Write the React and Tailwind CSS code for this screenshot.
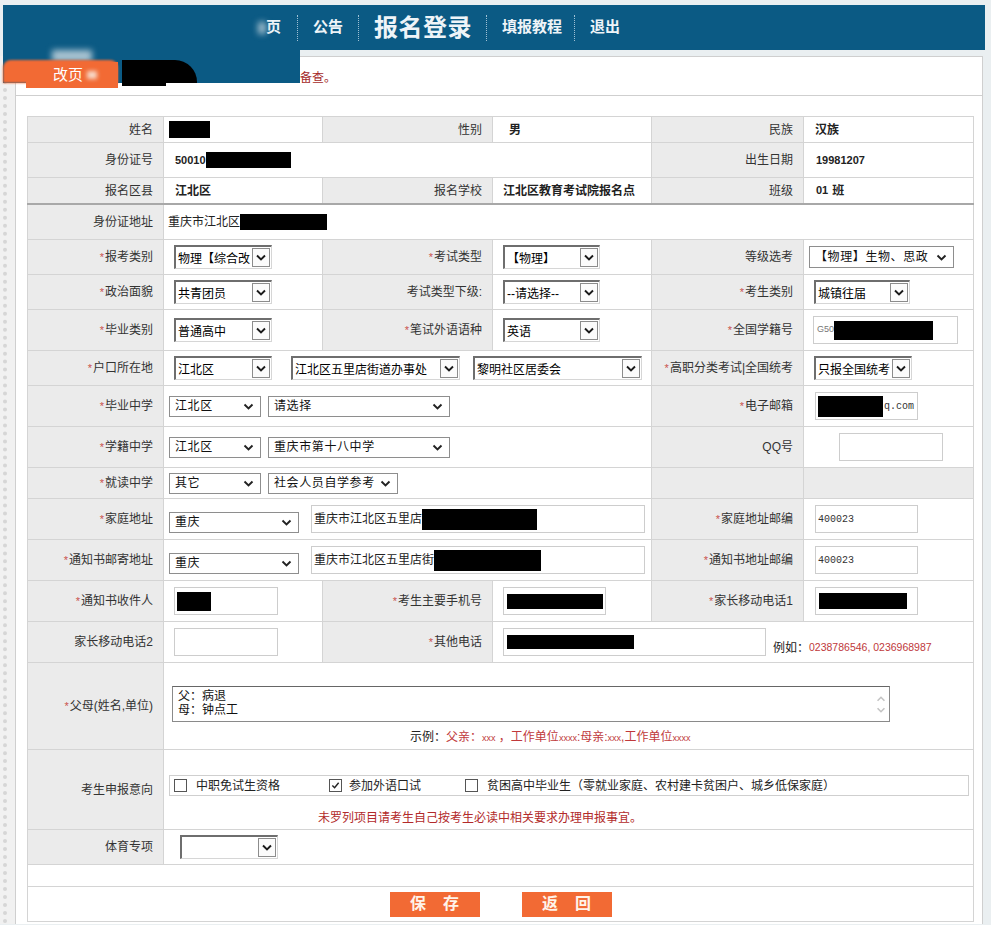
import React from 'react';

const Star = () => <span className="text-[#c9524c] text-[11px] mr-[1px]">*</span>;

function Chevron({ className }) {
  return (
    <svg viewBox="0 0 10 7" className={className} fill="none" stroke="currentColor" strokeWidth="1.9">
      <path d="M1 1.5 L5 5.5 L9 1.5" />
    </svg>
  );
}

function Label({ children, star, h = '', className = '' }) {
  return (
    <div className={`bg-[#ebebeb] flex items-center justify-end pr-[10px] text-[12px] text-[#333] whitespace-nowrap ${h} ${className}`}>
      {star && <Star />}
      {children}
    </div>
  );
}

function Cell({ children, className = '' }) {
  return <div className={`bg-white flex items-center ${className}`}>{children}</div>;
}

// old windows style select, arrow inside its own box
function OldSelect({ text, className = '' }) {
  return (
    <div className={`flex h-[24px] bg-white border-t-2 border-l-2 border-t-[#6e6e6e] border-l-[#6e6e6e] border-r border-b border-r-[#d6d6d6] border-b-[#d6d6d6] shrink-0 ${className}`}>
      <span className="flex-1 min-w-0 whitespace-nowrap pl-[2px] pt-[4px] text-[12px] leading-[16px] text-black">{text}</span>
      <span className="w-[18px] my-[1px] mr-[1px] flex items-center justify-center border border-[#8c8c8c] bg-[#fbfbfb] shrink-0">
        <Chevron className="w-[10px] h-[7px] text-[#1a1a1a]" />
      </span>
    </div>
  );
}

function NewSelect({ text, className = '' }) {
  return (
    <div className={`flex items-center h-[21px] bg-white border border-[#8e8e8e] shrink-0 ${className}`}>
      <span className="flex-1 min-w-0 whitespace-nowrap pl-[5px] text-[12px] tracking-[0.6px] leading-[19px] text-[#111]">{text}</span>
      <Chevron className="w-[11px] h-[7px] mr-[6px] text-[#222] shrink-0" />
    </div>
  );
}

function TextInput({ children, className = '' }) {
  return <div className={`h-[28px] border border-[#cdcdcd] bg-white flex items-center shrink-0 ${className}`}>{children}</div>;
}

function Box({ checked }) {
  return (
    <span className="w-[13px] h-[13px] border border-[#555] bg-white flex items-center justify-center shrink-0">
      {checked && (
        <svg viewBox="0 0 10 10" className="w-[9px] h-[9px]" fill="none" stroke="#222" strokeWidth="1.6">
          <path d="M1.5 5 L4 7.5 L8.5 2" />
        </svg>
      )}
    </span>
  );
}

const Sep = ({ className = '' }) => <span className={`h-[26px] border-l border-dotted border-[#9fc0d4] ${className}`} />;

export default function App() {
  return (
    <div className="relative min-h-screen w-[991px] bg-[#eaeff1] font-['Liberation_Sans','Noto_Sans_CJK_SC',sans-serif] overflow-hidden">
      {/* header bar */}
      <div className="pt-[5px] pl-[3px]">
        <div className="w-[982px] h-[45px] bg-[#0b5a84] flex items-center text-[#eef4f8] font-bold">
          <span className="ml-[255px] w-[8px] h-[12px] bg-[#9fbccc] blur-[3px]" />
          <span className="text-[15px]">页</span>
          <Sep className="ml-[16px]" />
          <span className="ml-[15px] text-[15px]">公告</span>
          <Sep className="ml-[15px]" />
          <span className="ml-[15px] text-[24px] tracking-[0.5px]">报名登录</span>
          <Sep className="ml-[14px]" />
          <span className="ml-[15px] text-[15px]">填报教程</span>
          <Sep className="ml-[12px]" />
          <span className="ml-[15px] text-[15px]">退出</span>
        </div>
      </div>

      <div className="flex mt-[6px]">
        {/* dotted left frame */}
        <div className="w-[15px] bg-[#f1f1f1] flex">
          <div className="ml-[3px] w-[4px] border-l-4 border-dotted border-[#d6d6d6]" />
        </div>

        <div className="w-[968px] bg-white border-x border-t border-[#cfcfcf]">
          {/* notice */}
          <div className="h-[39px] border-b border-[#cfcfcf] flex items-center">
            <span className="ml-[284px] mt-[4px] text-[12px] text-[#a52a2a]">备查。</span>
          </div>

          <div className="pt-[20px] pl-[11px] pb-[2px]">
            {/* basic info */}
            <div className="grid grid-cols-[135px_158px_169px_158px_151px_169px] gap-px bg-[#d4d4d4] px-px pt-px w-[947px] text-[12px] text-[#222]">
              <Label h="h-[25px]">姓名</Label>
              <Cell className="pl-[5px]"><span className="w-[41px] h-[17px] bg-black" /></Cell>
              <Label>性别</Label>
              <Cell className="pl-[16px] font-bold">男</Cell>
              <Label>民族</Label>
              <Cell className="pl-[11px] font-bold">汉族</Cell>

              <Label h="h-[34px]">身份证号</Label>
              <Cell className="col-span-3 pl-[11px] font-bold text-[11px]">
                50010<span className="w-[85px] h-[16px] bg-black" />
              </Cell>
              <Label>出生日期</Label>
              <Cell className="pl-[12px] font-bold text-[11px]">19981207</Cell>

              <Label h="h-[25px]">报名区县</Label>
              <Cell className="pl-[11px] font-bold">江北区</Cell>
              <Label>报名学校</Label>
              <Cell className="pl-[10px] font-bold">江北区教育考试院报名点</Cell>
              <Label>班级</Label>
              <Cell className="pl-[12px] font-bold"><span className="text-[11px] mr-[4px]">01</span>班</Cell>
            </div>
            <div className="w-[947px] h-[2px] bg-[#a8a8a8]" />

            {/* form */}
            <div className="grid grid-cols-[135px_158px_169px_158px_151px_169px] gap-px bg-[#d4d4d4] px-px pb-px w-[947px] text-[12px] text-[#222]">
              <Label h="h-[34px]">身份证地址</Label>
              <Cell className="col-span-5 pl-[4px]">重庆市江北区<span className="w-[87px] h-[16px] bg-black" /></Cell>

              <Label h="h-[34px]" star>报考类别</Label>
              <Cell><OldSelect className="ml-[10px] w-[98px]" text="物理【综合改" /></Cell>
              <Label star>考试类型</Label>
              <Cell><OldSelect className="ml-[10px] w-[97px]" text="【物理】" /></Cell>
              <Label>等级选考</Label>
              <Cell><NewSelect className="ml-[5px] w-[145px] h-[22px]" text="【物理】生物、思政" /></Cell>

              <Label h="h-[34px]" star>政治面貌</Label>
              <Cell><OldSelect className="ml-[10px] w-[98px]" text="共青团员" /></Cell>
              <Label>考试类型下级:</Label>
              <Cell><OldSelect className="ml-[10px] w-[97px]" text="--请选择--" /></Cell>
              <Label star>考生类别</Label>
              <Cell><OldSelect className="ml-[10px] w-[96px]" text="城镇往届" /></Cell>

              <Label h="h-[40px]" star>毕业类别</Label>
              <Cell><OldSelect className="ml-[10px] w-[98px]" text="普通高中" /></Cell>
              <Label star>笔试外语语种</Label>
              <Cell><OldSelect className="ml-[10px] w-[97px]" text="英语" /></Cell>
              <Label star>全国学籍号</Label>
              <Cell>
                <TextInput className="ml-[9px] w-[145px]">
                  <span className="pl-[3px] text-[9px] text-[#777]">G50</span>
                  <span className="w-[99px] h-[19px] bg-black" />
                </TextInput>
              </Cell>

              <Label h="h-[34px]" star>户口所在地</Label>
              <Cell className="col-span-3">
                <OldSelect className="ml-[10px] w-[98px]" text="江北区" />
                <OldSelect className="ml-[19px] w-[169px]" text="江北区五里店街道办事处" />
                <OldSelect className="ml-[13px] w-[169px]" text="黎明社区居委会" />
              </Cell>
              <Label star>高职分类考试|全国统考</Label>
              <Cell><OldSelect className="ml-[10px] w-[98px]" text="只报全国统考" /></Cell>

              <Label h="h-[40px]" star>毕业中学</Label>
              <Cell className="col-span-3">
                <NewSelect className="ml-[5px] w-[92px]" text="江北区" />
                <NewSelect className="ml-[7px] w-[182px]" text="请选择" />
              </Cell>
              <Label star>电子邮箱</Label>
              <Cell>
                <TextInput className="ml-[11px] w-[103px]">
                  <span className="ml-[2px] w-[65px] h-[21px] bg-black" />
                  <span className="ml-[1px] text-[10px] font-['Liberation_Mono',monospace] text-[#333]">q.com</span>
                </TextInput>
              </Cell>

              <Label h="h-[40px]" star>学籍中学</Label>
              <Cell className="col-span-3">
                <NewSelect className="ml-[5px] w-[92px]" text="江北区" />
                <NewSelect className="ml-[7px] w-[182px]" text="重庆市第十八中学" />
              </Cell>
              <Label>QQ号</Label>
              <Cell><TextInput className="ml-[35px] w-[104px]" /></Cell>

              <Label h="h-[30px]" star>就读中学</Label>
              <Cell className="col-span-3">
                <NewSelect className="ml-[5px] w-[92px] h-[20px]" text="其它" />
                <NewSelect className="ml-[7px] w-[130px] h-[20px]" text="社会人员自学参考" />
              </Cell>
              <Label />
              <div className="bg-[#ebebeb]" />

              <Label h="h-[40px]" star>家庭地址</Label>
              <Cell className="col-span-3">
                <NewSelect className="ml-[5px] mt-[6px] w-[130px] h-[20px]" text="重庆" />
                <TextInput className="ml-[12px] w-[334px]">
                  <span className="pl-[2px]">重庆市江北区五里店</span>
                  <span className="w-[115px] h-[21px] bg-black" />
                </TextInput>
              </Cell>
              <Label star>家庭地址邮编</Label>
              <Cell>
                <TextInput className="ml-[11px] w-[103px]">
                  <span className="pl-[2px] text-[10px] font-['Liberation_Mono',monospace] text-[#333]">400023</span>
                </TextInput>
              </Cell>

              <Label h="h-[40px]" star>通知书邮寄地址</Label>
              <Cell className="col-span-3">
                <NewSelect className="ml-[5px] mt-[6px] w-[130px] h-[20px]" text="重庆" />
                <TextInput className="ml-[12px] w-[334px]">
                  <span className="pl-[2px]">重庆市江北区五里店街</span>
                  <span className="w-[107px] h-[21px] bg-black" />
                </TextInput>
              </Cell>
              <Label star>通知书地址邮编</Label>
              <Cell>
                <TextInput className="ml-[11px] w-[103px]">
                  <span className="pl-[2px] text-[10px] font-['Liberation_Mono',monospace] text-[#333]">400023</span>
                </TextInput>
              </Cell>

              <Label h="h-[40px]" star>通知书收件人</Label>
              <Cell>
                <TextInput className="ml-[10px] w-[104px]"><span className="ml-[2px] w-[34px] h-[19px] bg-black" /></TextInput>
              </Cell>
              <Label star>考生主要手机号</Label>
              <Cell>
                <TextInput className="ml-[10px] w-[103px]"><span className="ml-[3px] w-[96px] h-[15px] bg-black" /></TextInput>
              </Cell>
              <Label star>家长移动电话1</Label>
              <Cell>
                <TextInput className="ml-[11px] w-[103px]"><span className="ml-[3px] w-[88px] h-[16px] bg-black" /></TextInput>
              </Cell>

              <Label h="h-[40px]">家长移动电话2</Label>
              <Cell><TextInput className="ml-[10px] w-[104px]" /></Cell>
              <Label star>其他电话</Label>
              <Cell className="col-span-3">
                <TextInput className="ml-[10px] w-[263px]"><span className="ml-[3px] w-[127px] h-[14px] bg-black" /></TextInput>
                <span className="ml-[7px] self-end mb-[5px]">例如：</span>
                <span className="self-end mb-[6px] text-[10.5px] text-[#c0393b]">0238786546, 0236968987</span>
              </Cell>

              <Label h="h-[86px]" star>父母(姓名,单位)</Label>
              <div className="col-span-5 bg-white flex flex-col items-start">
                <div className="ml-[8px] mt-[23px] w-[718px] h-[36px] border border-[#8a8a8a] border-t-[#666] flex">
                  <div className="flex-1 pl-[5px] pt-[2px] text-[12px] leading-[14px] text-[#111]">
                    <div>父：病退</div>
                    <div>母：钟点工</div>
                  </div>
                  <div className="w-[16px] flex flex-col items-center justify-center gap-[5px] text-[#c4c4c4]">
                    <Chevron className="w-[10px] h-[6px] rotate-180" />
                    <Chevron className="w-[10px] h-[6px]" />
                  </div>
                </div>
                <div className="ml-[246px] mt-[6px] text-[12px]">
                  示例：<span className="text-[#c0393b]">父亲：<span className="text-[9px]">xxx</span> ，工作单位<span className="text-[9px]">xxxx</span>:母亲:<span className="text-[9px]">xxx</span>,工作单位<span className="text-[9px]">xxxx</span></span>
                </div>
              </div>

              <Label h="h-[79px]">考生申报意向</Label>
              <div className="col-span-5 bg-white flex flex-col items-start">
                <div className="ml-[5px] mt-[25px] w-[800px] h-[21px] border border-[#cfcfcf] flex items-center text-[12px] text-[#222]">
                  <span className="ml-[4px]"><Box /></span>
                  <span className="ml-[9px]">中职免试生资格</span>
                  <span className="ml-[49px]"><Box checked /></span>
                  <span className="ml-[7px]">参加外语口试</span>
                  <span className="ml-[44px]"><Box /></span>
                  <span className="ml-[9px]">贫困高中毕业生（零就业家庭、农村建卡贫困户、城乡低保家庭）</span>
                </div>
                <div className="ml-[154px] mt-[13px] text-[12px] text-[#b22a2a]">未罗列项目请考生自己按考生必读中相关要求办理申报事宜。</div>
              </div>

              <Label h="h-[34px]">体育专项</Label>
              <Cell className="col-span-5"><OldSelect className="ml-[16px] w-[98px] h-[23px]" text="" /></Cell>

              <div className="col-span-6 h-[21px] bg-white" />
              <div className="col-span-6 h-[34px] bg-white flex items-center justify-center gap-[42px]">
                <button className="w-[90px] h-[25px] bg-[#f26a34] text-[#fff3ea] text-[16px] font-bold flex items-center justify-center gap-[17px]">
                  <span>保</span><span>存</span>
                </button>
                <button className="w-[90px] h-[25px] bg-[#f26a34] text-[#fff3ea] text-[16px] font-bold flex items-center justify-center gap-[17px]">
                  <span>返</span><span>回</span>
                </button>
              </div>
            </div>
          </div>
        </div>
      </div>

      {/* redacted area over the top-left corner */}
      <div className="absolute left-[3px] top-[50px] w-[297px] h-[33px] bg-[#0b5a84]" />
      <div className="absolute left-[52px] top-[50px] w-[40px] h-[12px] bg-[#a9c3d1] blur-[3px]" />
      <div className="absolute left-[3px] top-[60px] w-[115px] h-[23px] bg-[#f26a34] rounded-t-[8px] blur-[1px]" />
      <div className="absolute left-[26px] top-[62px] w-[92px] h-[26px] bg-[#f26a34] flex items-center pl-[27px] text-[15px] text-white">
        改页<span className="ml-[4px] w-[10px] h-[8px] bg-[#f7d9c8] blur-[2px]" />
      </div>
      <div className="absolute left-[122px] top-[60px] w-[75px] h-[23px] bg-black rounded-tr-[22px]" />
      <div className="absolute left-[122px] top-[82px] w-[44px] h-[4px] bg-black" />
    </div>
  );
}
